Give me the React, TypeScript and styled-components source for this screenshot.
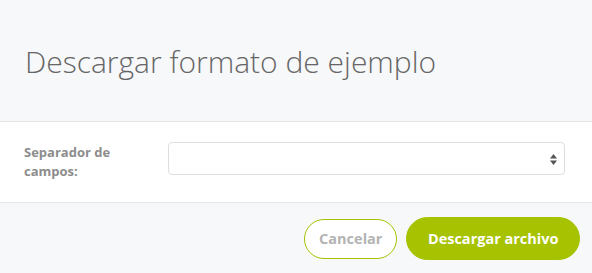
import { FC } from "react";
import styled, { createGlobalStyle } from "styled-components";

const GlobalStyle = createGlobalStyle`
  body {
    margin: 0;
    background: #ffffff;
    font-family: "Open Sans", "Liberation Sans", sans-serif;
  }
`;

const Modal = styled.div`
  width: 592px;
  height: 273px;
  display: flex;
  flex-direction: column;
  background: #ffffff;
`;

const Header = styled.header`
  height: 122px;
  box-sizing: border-box;
  display: flex;
  align-items: center;
  padding: 0 25px;
  background: #f7f8fa;
  border-bottom: 1px solid #e4e5e7;
`;

const Title = styled.h2`
  margin: 0;
  padding-top: 1px;
  font-size: 30px;
  font-weight: 300;
  color: #666666;
`;

const Body = styled.section`
  display: grid;
  grid-template-columns: 144px 1fr;
  align-items: start;
  padding: 20px 27px 21px 24px;
  border-bottom: 1px solid #e4e5e7;
`;

const Label = styled.label`
  margin-top: 1px;
  font-size: 13px;
  font-weight: 700;
  line-height: 19px;
  color: #8c8c8c;
  width: 116px;
`;

const SelectBox = styled.div`
  position: relative;
  height: 33px;
  box-sizing: border-box;
  border: 1px solid #dedede;
  border-radius: 4px;
  background: #ffffff;
`;

const Arrows = styled.svg`
  position: absolute;
  right: 7px;
  top: 11px;
`;

const Footer = styled.footer`
  flex: 1;
  display: flex;
  justify-content: flex-end;
  align-items: center;
  gap: 9px;
  padding: 1px 12px 0 0;
  background: #f7f8fa;
`;

const Button = styled.button<{ $primary?: boolean }>`
  font-family: "Open Sans", "Liberation Sans", sans-serif;
  font-weight: 700;
  font-size: 14.5px;
  border-radius: 22px;
  cursor: pointer;
  height: ${(p) => (p.$primary ? "43px" : "40px")};
  padding: ${(p) => (p.$primary ? "0 20.5px" : "0 14px")};
  border: 1px solid #a6c200;
  background: ${(p) => (p.$primary ? "#a6c200" : "#ffffff")};
  color: ${(p) => (p.$primary ? "#ffffff" : "#b3b3b3")};
`;

const App: FC = () => {
  return (
    <>
      <GlobalStyle />
      <Modal>
        <Header>
          <Title>Descargar formato de ejemplo</Title>
        </Header>
        <Body>
          <Label>Separador de campos:</Label>
          <SelectBox>
            <Arrows width="7" height="11" viewBox="0 0 7 11">
              <path d="M3.5 0 L7 4.5 L0 4.5 Z" fill="#555" />
              <path d="M3.5 11 L7 6.5 L0 6.5 Z" fill="#555" />
            </Arrows>
          </SelectBox>
        </Body>
        <Footer>
          <Button>Cancelar</Button>
          <Button $primary>Descargar archivo</Button>
        </Footer>
      </Modal>
    </>
  );
};

export default App;
